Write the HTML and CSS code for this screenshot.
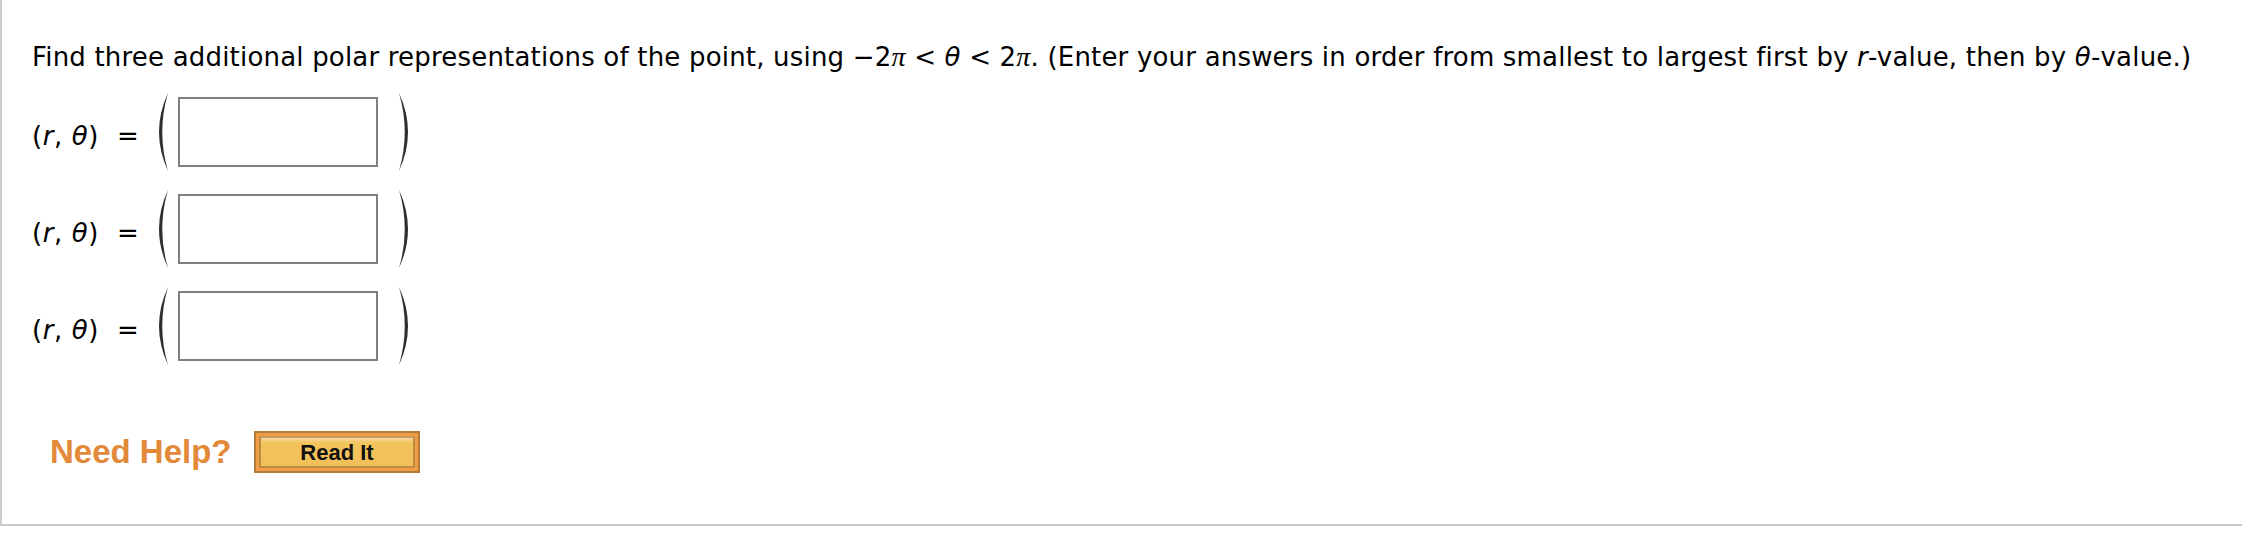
FILE: index.html
```html
<!DOCTYPE html>
<html lang="en">
<head>
<meta charset="utf-8">
<title>Polar representations</title>
<link rel="stylesheet" href="styles.css">
</head>
<body>
<div class="card">
  <p class="prompt">Find three additional polar representations of the point, using &minus;2<span class="pi">&pi;</span> &lt; <i>&theta;</i> &lt; 2<span class="pi">&pi;</span>. (Enter your answers in order from smallest to largest first by <i>r</i>-value, then by <i>&theta;</i>-value.)</p>
  <div class="answers">
    <div class="row">
      <span class="label">(<i>r</i>, <i>&theta;</i>)</span>
      <span class="eq">=</span>
      <svg class="paren" viewBox="0 0 18 80" width="18" height="80"><path d="M16 1 Q-2 40 16 79 Q4.5 40 16 1 Z"/></svg>
      <span class="box"></span>
      <svg class="paren right" viewBox="0 0 18 80" width="18" height="80"><path d="M2 1 Q20 40 2 79 Q13.5 40 2 1 Z"/></svg>
    </div>
    <div class="row">
      <span class="label">(<i>r</i>, <i>&theta;</i>)</span>
      <span class="eq">=</span>
      <svg class="paren" viewBox="0 0 18 80" width="18" height="80"><path d="M16 1 Q-2 40 16 79 Q4.5 40 16 1 Z"/></svg>
      <span class="box"></span>
      <svg class="paren right" viewBox="0 0 18 80" width="18" height="80"><path d="M2 1 Q20 40 2 79 Q13.5 40 2 1 Z"/></svg>
    </div>
    <div class="row">
      <span class="label">(<i>r</i>, <i>&theta;</i>)</span>
      <span class="eq">=</span>
      <svg class="paren" viewBox="0 0 18 80" width="18" height="80"><path d="M16 1 Q-2 40 16 79 Q4.5 40 16 1 Z"/></svg>
      <span class="box"></span>
      <svg class="paren right" viewBox="0 0 18 80" width="18" height="80"><path d="M2 1 Q20 40 2 79 Q13.5 40 2 1 Z"/></svg>
    </div>
  </div>
  <div class="help">
    <span class="need">Need Help?</span>
    <span class="read"><span class="read-inner">Read It</span></span>
  </div>
</div>
</body>
</html>
```

FILE: styles.css
```css
html, body {
  margin: 0;
  padding: 0;
  background: #ffffff;
}

.card {
  box-sizing: border-box;
  height: 526px;
  border-left: 2px solid #cccccc;
  border-bottom: 2px solid #cccccc;
  padding: 41px 0 0 30px;
  font-family: "DejaVu Sans", Verdana, sans-serif;
  color: #000000;
}

.prompt {
  margin: 0;
  font-size: 26px;
  line-height: 32px;
  letter-spacing: 0.19px;
  white-space: nowrap;
}

.pi {
  font-family: "Liberation Serif", "DejaVu Serif", serif;
  font-style: italic;
  font-size: 28px;
}

.answers {
  display: flex;
  flex-direction: column;
  gap: 17px;
  margin-top: 19px;
}

.row {
  display: flex;
  align-items: center;
  height: 80px;
}

.label {
  width: 85px;
  font-size: 26px;
  line-height: 32px;
  letter-spacing: 0.6px;
  padding-top: 8px;
}

.eq {
  width: 35px;
  font-size: 26px;
  line-height: 32px;
  padding-top: 8px;
}

.paren {
  display: block;
  flex: none;
}

.paren path {
  fill: #2e2e2e;
}

.box {
  box-sizing: border-box;
  width: 200px;
  height: 70px;
  margin-left: 8px;
  border: 2px solid #808080;
  background: #ffffff;
}

.paren.right {
  margin-left: 19px;
}

.help {
  display: flex;
  align-items: center;
  margin-top: 65px;
  height: 42px;
}

.need {
  margin-left: 18px;
  font-family: "Liberation Sans", Arial, sans-serif;
  font-weight: bold;
  font-size: 33px;
  color: #e2893a;
  width: 204px;
}

.read {
  box-sizing: border-box;
  width: 166px;
  height: 42px;
  border: 2px solid #b27a3c;
  background: #ee9d45;
  padding: 3px;
  display: flex;
}

.read-inner {
  flex: 1;
  box-sizing: border-box;
  border: 2px solid #c08a40;
  border-top-color: #c49a60;
  background: linear-gradient(#f6d9a0 0, #f3c35c 5px, #f2c05a 100%);
  font-family: "Liberation Sans", Arial, sans-serif;
  font-weight: bold;
  font-size: 22px;
  color: #111111;
  display: flex;
  align-items: center;
  justify-content: center;
  padding-top: 2px;
}
```
